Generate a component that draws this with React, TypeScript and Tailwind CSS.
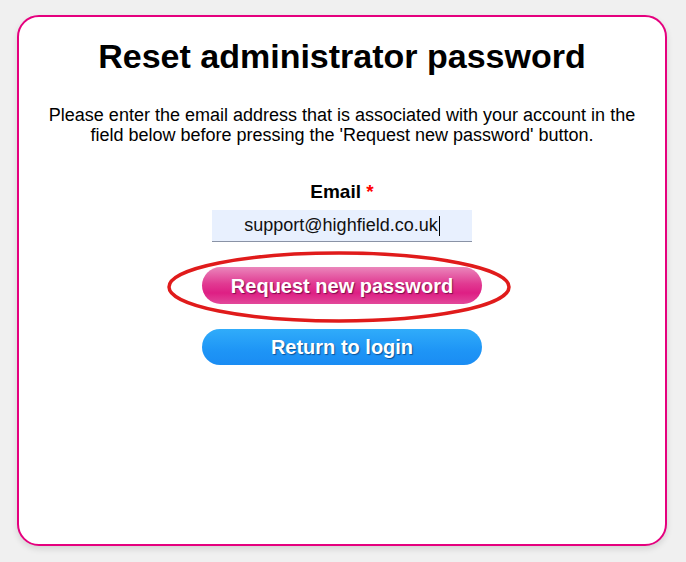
export default function App() {
  return (
    <div className="min-h-[562px] bg-[#f0f0f0] pt-[15px] pl-[17px] font-['Liberation_Sans',Arial,sans-serif]">
      <div className="flex h-[531px] w-[650px] flex-col items-center rounded-[22px] border-2 border-[#e5007e] bg-white px-[24px] shadow-[0_3px_6px_rgba(0,0,0,0.12)]">
        <h1 className="mt-[20px] text-[34px] font-bold leading-[38px] text-black">Reset administrator password</h1>
        <p className="mt-[30px] text-center text-[18px] leading-[20px] text-black">
          Please enter the email address that is associated with your account in the field below before pressing the 'Request new password' button.
        </p>
        <label className="mt-[36px] text-[19px] font-bold leading-[22px] text-black">
          Email <span className="text-[#ff0000]">*</span>
        </label>
        <div className="mt-[7px] flex h-[32px] w-[260px] items-center justify-center border-b border-[#8a93a6] bg-[#e8f0fe] text-[18px] text-[#111]">
          support@highfield.co.uk<span className="ml-[1px] inline-block h-[20px] w-px bg-black" />
        </div>
        <div className="relative mt-[25px]">
          <button className="h-[37px] w-[280px] rounded-full bg-[linear-gradient(to_bottom,#ea86bb_0%,#e13a92_45%,#de1f84_70%,#e2489a_100%)] text-[20px] font-bold text-white [text-shadow:1px_1px_1px_rgba(60,0,40,0.6)]">
            Request new password
          </button>
          <svg className="pointer-events-none absolute left-[-36px] top-[-17px]" width="346" height="74" viewBox="0 0 346 74">
            <ellipse cx="173" cy="37" rx="170" ry="34" fill="none" stroke="#e01b1b" strokeWidth="3.5" />
          </svg>
        </div>
        <button className="mt-[25px] h-[36px] w-[280px] rounded-full bg-[linear-gradient(to_bottom,#30acfa_0%,#1e95f6_60%,#1a8cf3_100%)] text-[20px] font-bold text-white [text-shadow:1px_1px_1px_rgba(0,40,90,0.6)]">
          Return to login
        </button>
      </div>
    </div>
  )
}
